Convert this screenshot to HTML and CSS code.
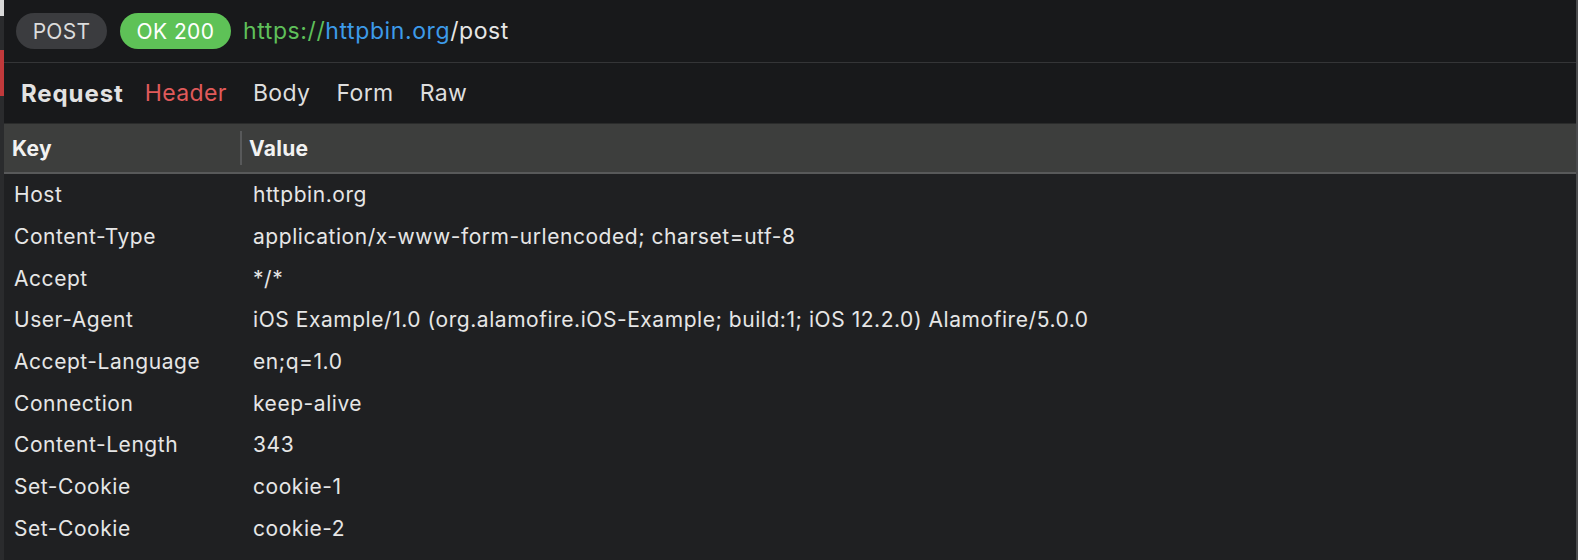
FILE: index.html
```html
<!DOCTYPE html>
<html>
<head>
<meta charset="utf-8">
<link rel="stylesheet" href="styles.css">
</head>
<body>
<div class="app">
  <div class="edge">
    <div class="edge-top"></div>
    <div class="edge-gap"></div>
    <div class="edge-red"></div>
    <div class="edge-rest"></div>
  </div>
  <div class="main">
    <div class="topbar">
      <span class="pill pill-method">POST</span>
      <span class="pill pill-status">OK 200</span>
      <span class="url"><span class="scheme">https://</span><span class="host">httpbin.org</span><span class="path">/post</span></span>
    </div>
    <div class="tabs">
      <span class="tabs-title">Request</span>
      <span class="tab active">Header</span>
      <span class="tab">Body</span>
      <span class="tab">Form</span>
      <span class="tab">Raw</span>
    </div>
    <div class="table">
      <div class="thead">
        <div class="th th-key">Key</div>
        <div class="th th-value">Value</div>
      </div>
      <div class="row"><div class="k">Host</div><div class="v">httpbin.org</div></div>
      <div class="row"><div class="k">Content-Type</div><div class="v">application/x-www-form-urlencoded; charset=utf-8</div></div>
      <div class="row"><div class="k">Accept</div><div class="v">*/*</div></div>
      <div class="row"><div class="k">User-Agent</div><div class="v">iOS Example/1.0 (org.alamofire.iOS-Example; build:1; iOS 12.2.0) Alamofire/5.0.0</div></div>
      <div class="row"><div class="k">Accept-Language</div><div class="v">en;q=1.0</div></div>
      <div class="row"><div class="k">Connection</div><div class="v">keep-alive</div></div>
      <div class="row"><div class="k">Content-Length</div><div class="v">343</div></div>
      <div class="row"><div class="k">Set-Cookie</div><div class="v">cookie-1</div></div>
      <div class="row"><div class="k">Set-Cookie</div><div class="v">cookie-2</div></div>
    </div>
  </div>
  <div class="right-edge"></div>
</div>
</body>
</html>
```

FILE: styles.css
```css
html, body {
  margin: 0;
  padding: 0;
  background: #1f2022;
}
body {
  font-family: Inter, "Noto Sans", sans-serif;
  color: #e4e4e4;
  width: 1578px;
  height: 560px;
  overflow: hidden;
}
.app {
  display: flex;
  height: 560px;
}
.edge {
  width: 4px;
  display: flex;
  flex-direction: column;
  background: #2a2b2d;
}
.edge-top { height: 16px; background: #d8d8d8; }
.edge-gap { height: 34px; background: #2a2b2d; }
.edge-red { height: 46px; background: #c0393b; }
.edge-rest { flex: 1; background: #2a2b2d; }
.main {
  flex: 1;
  display: flex;
  flex-direction: column;
  min-width: 0;
}
.right-edge {
  width: 2px;
  background: #4a4b4d;
}
.topbar {
  height: 62px;
  background: #18191b;
  border-bottom: 1px solid #343537;
  display: flex;
  align-items: center;
  padding-left: 12px;
  gap: 13px;
}
.pill {
  height: 36px;
  border-radius: 18px;
  display: flex;
  align-items: center;
  justify-content: center;
  font-size: 21px;
  letter-spacing: 0.3px;
  box-sizing: border-box;
}
.pill-method {
  width: 91px;
  background: #3b3c3f;
  color: #dcdcdc;
}
.pill-status {
  width: 111px;
  background: #5ec257;
  color: #ffffff;
  letter-spacing: 0.4px;
}
.url {
  font-size: 23px;
  letter-spacing: 0.6px;
  margin-left: -1px;
}
.scheme { color: #5fc05a; }
.host { color: #3d9be9; }
.path { color: #e6e6e6; }
.tabs {
  height: 60px;
  background: #18191b;
  display: flex;
  align-items: center;
  padding-left: 17px;
}
.tabs-title {
  font-weight: 700;
  font-size: 24px;
  letter-spacing: 0.9px;
  color: #e2e2e2;
  margin-right: 21px;
}
.tab {
  font-size: 23px;
  letter-spacing: 0.4px;
  color: #dedede;
  margin-right: 26px;
}
.tab.active { color: #e05a5a; }
.table {
  display: flex;
  flex-direction: column;
  flex: 1;
  background: #1f2022;
}
.thead {
  height: 48px;
  background: #3d3e3d;
  border-top: 1px solid #2a2b2b;
  border-bottom: 2px solid #58595a;
  display: flex;
  align-items: center;
  font-weight: 700;
  font-size: 21px;
  letter-spacing: 0.3px;
  color: #f2f2f2;
}
.th-key {
  width: 238px;
  padding-left: 8px;
  box-sizing: border-box;
  border-right: 2px solid #58595a;
  height: 34px;
  display: flex;
  align-items: center;
}
.th-value {
  padding-left: 7px;
}
.row {
  height: 41.7px;
  display: flex;
  align-items: center;
  font-size: 21px;
  letter-spacing: 0.55px;
  color: #e6e6e6;
}
.row .k {
  width: 239px;
  padding-left: 10px;
  box-sizing: border-box;
}
.row .v {
  padding-left: 10px;
}
```
